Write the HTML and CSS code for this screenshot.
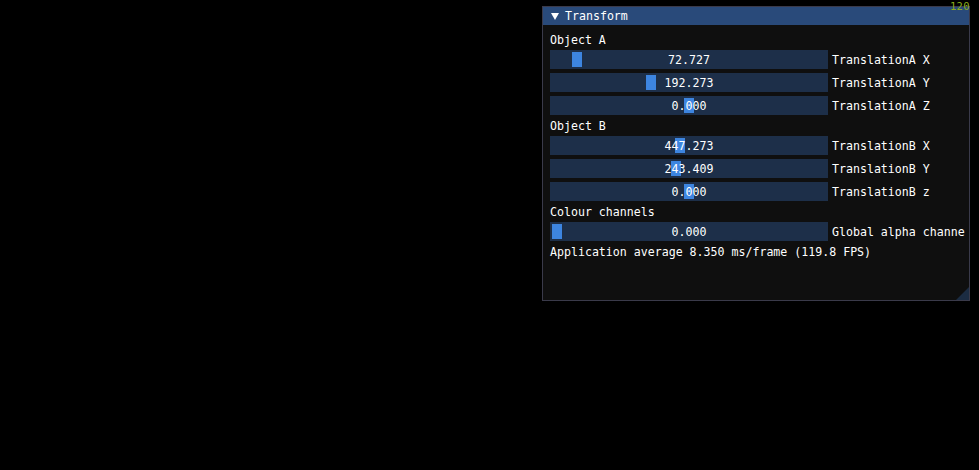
FILE: index.html
```html
<!DOCTYPE html>
<html>
<head>
<meta charset="utf-8">
<link rel="stylesheet" href="styles.css">
</head>
<body>
<div class="fps">120</div>
<div class="window">
  <div class="titlebar">
    <svg class="arrow" width="8" height="7" viewBox="0 0 8 7"><path d="M0 0H8L4 7Z" fill="#fff"/></svg>
    <span class="title">Transform</span>
  </div>
  <div class="content">
    <div class="text">Object A</div>
    <div class="row"><div class="frame"><div class="grab" style="left:22px"></div><span class="val">72.727</span></div><div class="label">TranslationA X</div></div>
    <div class="row"><div class="frame"><div class="grab" style="left:96px"></div><span class="val">192.273</span></div><div class="label">TranslationA Y</div></div>
    <div class="row"><div class="frame"><div class="grab" style="left:134px"></div><span class="val">0.000</span></div><div class="label">TranslationA Z</div></div>
    <div class="text">Object B</div>
    <div class="row"><div class="frame"><div class="grab" style="left:125px"></div><span class="val">447.273</span></div><div class="label">TranslationB X</div></div>
    <div class="row"><div class="frame"><div class="grab" style="left:121px"></div><span class="val">243.409</span></div><div class="label">TranslationB Y</div></div>
    <div class="row"><div class="frame"><div class="grab" style="left:134px"></div><span class="val">0.000</span></div><div class="label">TranslationB z</div></div>
    <div class="text">Colour channels</div>
    <div class="row"><div class="frame"><div class="grab" style="left:2px"></div><span class="val">0.000</span></div><div class="label">Global alpha channe</div></div>
    <div class="text">Application average 8.350 ms/frame (119.8 FPS)</div>
  </div>
  <div class="grip"></div>
</div>
</body>
</html>
```
FILE: styles.css
```css
html, body {
  margin: 0;
  padding: 0;
  background: #000;
  width: 979px;
  height: 470px;
  overflow: hidden;
}
body {
  font-family: "DejaVu Sans Mono", "Liberation Mono", monospace;
  font-size: 11.6px;
  color: #fff;
  position: relative;
}
.fps {
  position: absolute;
  left: 950px;
  top: 1px;
  font-family: "DejaVu Sans Mono", monospace;
  font-size: 10.5px;
  letter-spacing: 0.3px;
  color: #8aab1c;
  line-height: 11px;
  z-index: 2;
}
.window {
  position: absolute;
  left: 542px;
  top: 6px;
  width: 428px;
  height: 295px;
  box-sizing: border-box;
  border: 1px solid #3a3a4a;
  background: #0f0f0f;
  overflow: hidden;
}
.titlebar {
  height: 18px;
  background: #294a7a;
  display: flex;
  align-items: center;
  padding-left: 8px;
  gap: 6px;
  box-sizing: border-box;
}
.arrow {
  display: block;
}
.title {
  line-height: 19px;
}
.content {
  padding: 8px 7px 0 7px;
  display: flex;
  flex-direction: column;
  gap: 4px;
}
.text {
  height: 13px;
  line-height: 15px;
  white-space: nowrap;
}
.row {
  display: flex;
  align-items: center;
  gap: 4px;
  height: 19px;
}
.frame {
  position: relative;
  width: 278px;
  height: 19px;
  flex: none;
  background: #1d2f49;
  display: flex;
  align-items: center;
  justify-content: center;
}
.grab {
  position: absolute;
  top: 2px;
  width: 10px;
  height: 15px;
  background: #3d85e0;
}
.val {
  position: relative;
  line-height: 17px;
  padding-top: 2px;
}
.label {
  flex: none;
  white-space: nowrap;
  line-height: 17px;
  padding-top: 2px;
}
.grip {
  position: absolute;
  right: 0;
  bottom: 0;
  width: 13px;
  height: 13px;
  background: #1b2c42;
  clip-path: polygon(100% 0, 100% 100%, 0 100%);
}
```
